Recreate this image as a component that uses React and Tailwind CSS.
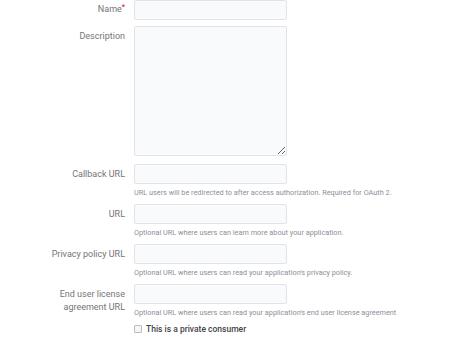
import React from "react";

const rows = [
  {
    label: "Callback URL",
    help: "URL users will be redirected to after access authorization. Required for OAuth 2.",
  },
  {
    label: "URL",
    help: "Optional URL where users can learn more about your application.",
  },
  {
    label: "Privacy policy URL",
    help: "Optional URL where users can read your application's privacy policy.",
  },
  {
    label: ["End user license", "agreement URL"],
    help: "Optional URL where users can read your application's end user license agreement",
  },
];

function Label({ children, className = "" }) {
  return (
    <div className={`w-[125px] shrink-0 text-right text-[9px] leading-[12px] text-[#757575] ${className}`}>
      {children}
    </div>
  );
}

function Input() {
  return (
    <input
      type="text"
      className="block h-[20px] w-[153px] rounded-[2px] border border-[#e1e3e6] bg-[#f9fafb] outline-none"
    />
  );
}

export default function App() {
  return (
    <div
      className="h-[363px] w-[474px] overflow-hidden bg-white"
      style={{ fontFamily: "Roboto, 'Liberation Sans', sans-serif" }}
    >
      {/* Name */}
      <div className="flex">
        <Label className="pt-[3px]">
          Name<span className="relative -top-[3px] text-[7px] font-bold text-[#e0312b]">*</span>
        </Label>
        <div className="ml-[9px]">
          <Input />
        </div>
      </div>

      {/* Description */}
      <div className="mt-[6px] flex">
        <Label className="pt-[4px]">Description</Label>
        <div className="ml-[9px]">
          <textarea className="block h-[130px] w-[153px] rounded-[2px] border border-[#e1e3e6] bg-[#f9fafb] outline-none" />
        </div>
      </div>

      <div className="mt-[8px]">
        {rows.map((r, i) => (
          <div key={i} className="mb-[6px] flex">
            <Label className="pt-[4px]">
              {Array.isArray(r.label)
                ? r.label.map((l) => (
                    <div key={l} className="leading-[13px]">
                      {l}
                    </div>
                  ))
                : r.label}
            </Label>
            <div className="ml-[9px]">
              <Input />
              <p className="mt-[4px] whitespace-nowrap text-[7.3px] leading-[10px] text-[#8c9097]">
                {r.help}
              </p>
            </div>
          </div>
        ))}
      </div>

      {/* Private consumer */}
      <div className="-mt-[1px] flex items-center pl-[134px]">
        <span className="h-[8px] w-[8px] rounded-[1px] border border-[#b9bcc0] bg-[#f4f5f6]" />
        <span className="ml-[4px] text-[8.5px] font-medium leading-[12px] text-[#3f4448]">
          This is a private consumer
        </span>
      </div>
    </div>
  );
}
